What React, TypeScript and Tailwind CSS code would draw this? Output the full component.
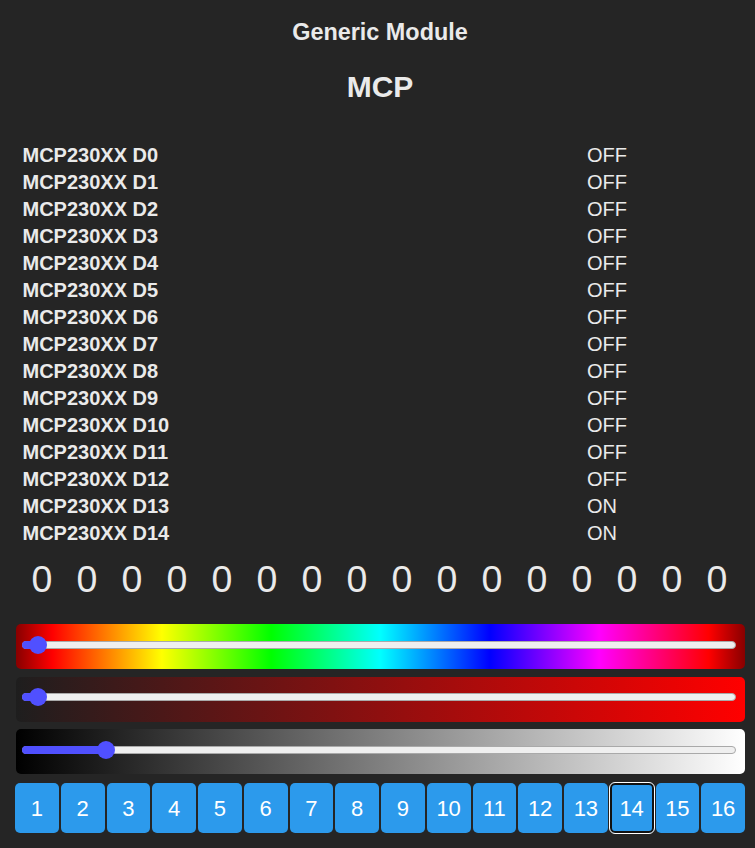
import React from "react"

const rows = [
  ["MCP230XX D0", "OFF"],
  ["MCP230XX D1", "OFF"],
  ["MCP230XX D2", "OFF"],
  ["MCP230XX D3", "OFF"],
  ["MCP230XX D4", "OFF"],
  ["MCP230XX D5", "OFF"],
  ["MCP230XX D6", "OFF"],
  ["MCP230XX D7", "OFF"],
  ["MCP230XX D8", "OFF"],
  ["MCP230XX D9", "OFF"],
  ["MCP230XX D10", "OFF"],
  ["MCP230XX D11", "OFF"],
  ["MCP230XX D12", "OFF"],
  ["MCP230XX D13", "ON"],
  ["MCP230XX D14", "ON"],
]

const channels = Array.from({ length: 16 }, (_, i) => i + 1)

// track is 714px wide, thumb center travels from 15px to 699px
function Slider({ bg, value }: { bg: string; value: number }) {
  const center = 15 + value * 684
  return (
    <div className={`ml-[1px] h-[45px] rounded-[5px] pt-[16.5px] pl-[6px] pr-[9px] ${bg}`}>
      <div className="relative h-[8px] rounded-full border border-[#a9a9a9] bg-[#efefef]">
        <div
          className="absolute -top-px -bottom-px -left-px rounded-l-full bg-[#5050ff]"
          style={{ width: center }}
        />
        <div
          className="absolute top-[-6px] h-[18px] w-[18px] rounded-full bg-[#5050ff]"
          style={{ left: center - 9 }}
        />
      </div>
    </div>
  )
}

export default function App() {
  return (
    <div className="min-h-screen bg-[#252525] text-[#eaeaea] font-['Liberation_Sans',Arial,sans-serif]">
      <div className="pl-[15px] pr-[10px] pb-[14px]">
        <div className="pt-[18.5px] h-[44px] text-center text-[23.4px] leading-[27px] font-bold">
          Generic Module
        </div>
        <div className="mt-[26px] h-[34px] text-center text-[30px] leading-[34px] font-bold">MCP</div>

        <div className="mt-[37.5px] pl-[7.5px]">
          {rows.map(([label, state]) => (
            <div key={label} className="flex h-[27px] text-[20px] leading-[27px]">
              <div className="w-[564.5px] font-bold">{label}</div>
              <div>{state}</div>
            </div>
          ))}
        </div>

        <div className="mt-[11px] ml-[4.5px] grid w-[720px] grid-cols-16 h-[43px] text-[37.5px] leading-[43px] text-center">
          {channels.map((c) => (
            <div key={c}>0</div>
          ))}
        </div>

        <div className="mt-[23.5px] flex flex-col gap-[7.5px]">
          <Slider
            bg="bg-[linear-gradient(to_right,#800,#f00_5%,#ff0_20%,#0f0_35%,#0ff_50%,#00f_65%,#f0f_80%,#f00_95%,#800)]"
            value={0}
          />
          <Slider bg="bg-[linear-gradient(to_right,#1e1e1e,#f00)]" value={0} />
          <Slider bg="bg-[linear-gradient(to_right,#000,#fff)]" value={0.1} />
        </div>

        <div className="mt-[9px] grid grid-cols-16 gap-[2px]">
          {channels.map((c) => (
            <button
              key={c}
              className={
                c === 14
                  ? "h-[50px] rounded-[5px] bg-[#2c9aec] text-[22px] text-white outline-1 outline-white shadow-[inset_0_0_0_2px_#111]"
                  : "h-[50px] rounded-[5px] bg-[#2c9aec] text-[22px] text-white"
              }
            >
              {c}
            </button>
          ))}
        </div>
      </div>
    </div>
  )
}
